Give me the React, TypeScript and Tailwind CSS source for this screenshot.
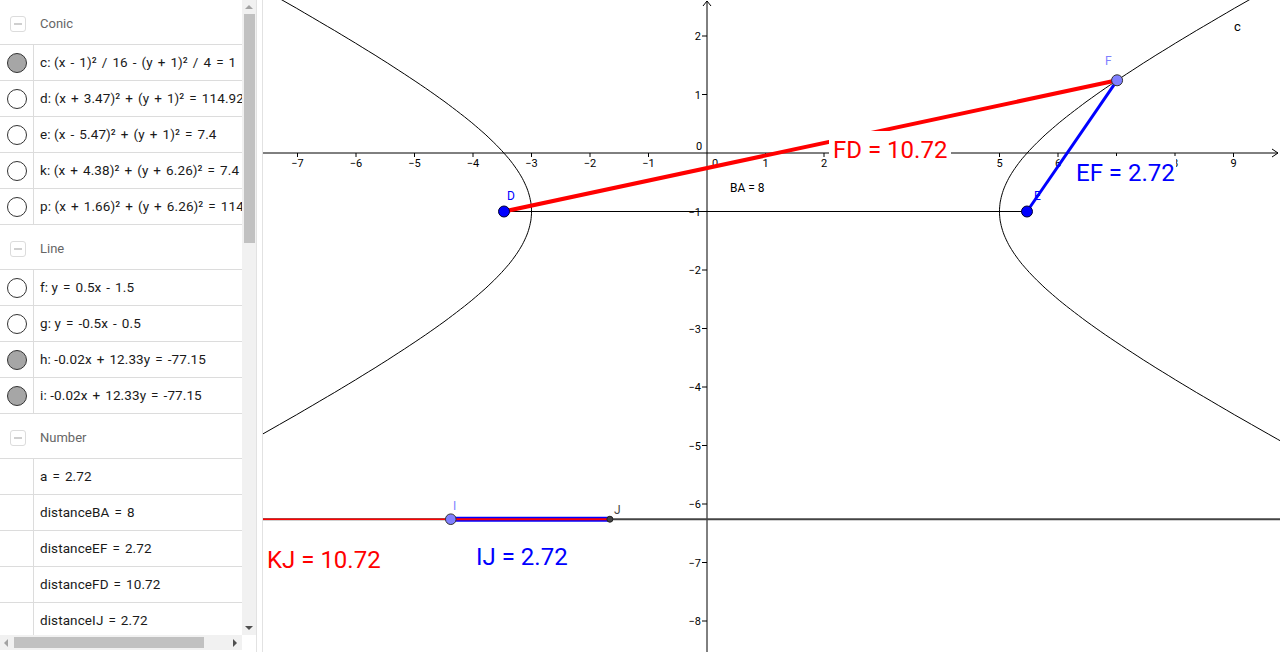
import React from 'react';

const S = 58.5;
const OX = 707;
const OY = 153;
const X = (x: number) => OX + S * x;
const Y = (y: number) => OY - S * y;

type Row = { text: string; marker?: 'filled' | 'empty' };

const GROUPS: { title: string; rows: Row[] }[] = [
  {
    title: 'Conic',
    rows: [
      { text: 'c: (x - 1)² / 16 - (y + 1)² / 4 = 1', marker: 'filled' },
      { text: 'd: (x + 3.47)² + (y + 1)² = 114.92', marker: 'empty' },
      { text: 'e: (x - 5.47)² + (y + 1)² = 7.4', marker: 'empty' },
      { text: 'k: (x + 4.38)² + (y + 6.26)² = 7.4', marker: 'empty' },
      { text: 'p: (x + 1.66)² + (y + 6.26)² = 114.92', marker: 'empty' },
    ],
  },
  {
    title: 'Line',
    rows: [
      { text: 'f: y = 0.5x - 1.5', marker: 'empty' },
      { text: 'g: y = -0.5x - 0.5', marker: 'empty' },
      { text: 'h: -0.02x + 12.33y = -77.15', marker: 'filled' },
      { text: 'i: -0.02x + 12.33y = -77.15', marker: 'filled' },
    ],
  },
  {
    title: 'Number',
    rows: [
      { text: 'a = 2.72' },
      { text: 'distanceBA = 8' },
      { text: 'distanceEF = 2.72' },
      { text: 'distanceFD = 10.72' },
      { text: 'distanceIJ = 2.72' },
    ],
  },
];

// binary operators get a little extra room, like the math renderer does
function MathText({ text }: { text: string }) {
  const parts = text.split(/ ([-+=/]) /);
  return (
    <>
      {parts.map((p, i) =>
        i % 2 === 1 ? (
          <span key={i} className="mx-[1.5px]">
            {' ' + p + ' '}
          </span>
        ) : (
          <span key={i}>{p}</span>
        )
      )}
    </>
  );
}

function branch(sign: number) {
  const pts: string[] = [];
  for (let t = -2.4; t <= 2.4; t += 0.02) {
    const x = 1 + sign * 4 * Math.cosh(t);
    const y = -1 + 2 * Math.sinh(t);
    pts.push(`${X(x).toFixed(1)},${Y(y).toFixed(1)}`);
  }
  return 'M' + pts.join(' L');
}

function AlgebraView() {
  return (
    <div className="w-[242px] overflow-hidden bg-white">
      {GROUPS.map((g) => (
        <div key={g.title}>
          <div className="flex h-[44px] items-center pt-[4px]">
            <div className="ml-[10px] flex h-[16px] w-[16px] items-center justify-center rounded-[3px] border border-[#dcdcdc]">
              <div className="h-[2px] w-[8px] bg-[#cfcfcf]" />
            </div>
            <span className="ml-[14px] text-[13px] text-[#666]">{g.title}</span>
          </div>
          <div className="border-b border-[#dcdcdc]">
            {g.rows.map((r) => (
              <div key={r.text} className="flex h-[36px] border-t border-[#dcdcdc]">
                <div className="flex w-[34px] shrink-0 items-center justify-center border-r border-[#dcdcdc]">
                  {r.marker && (
                    <div
                      className={
                        r.marker === 'filled'
                          ? 'h-[20px] w-[20px] rounded-full border border-[#333] bg-[#a6a6a6]'
                          : 'h-[20px] w-[20px] rounded-full border border-[#333] bg-white'
                      }
                    />
                  )}
                </div>
                <div className="flex items-center whitespace-pre pl-[6px] text-[13.5px] tracking-[0.1px] text-[#1a1a1a]">
                  <MathText text={r.text} />
                </div>
              </div>
            ))}
          </div>
        </div>
      ))}
    </div>
  );
}

function Graphics() {
  const xTicks = [-7, -6, -5, -4, -3, -2, -1, 1, 2, 3, 4, 5, 6, 7, 8, 9];
  const yTicks = [2, 1, -1, -2, -3, -4, -5, -6, -7, -8];
  const D = { x: X(-3.47), y: Y(-1) };
  const E = { x: X(5.47), y: Y(-1) };
  const F = { x: X(7.01), y: Y(1.243) };
  const I = { x: X(-4.38), y: Y(-6.26) };
  const J = { x: X(-1.66), y: Y(-6.26) };
  return (
    <svg width={1017} height={652} viewBox="263 0 1017 652" className="block font-['Roboto',sans-serif]">
      {/* axes */}
      <line x1={263} y1={OY} x2={1278} y2={OY} stroke="#000" strokeWidth={1} />
      <polyline points="1272,149 1278,153 1272,157" fill="none" stroke="#000" strokeWidth={1} />
      <line x1={OX} y1={1} x2={OX} y2={652} stroke="#000" strokeWidth={1} />
      <polyline points="703,6 707,1 711,6" fill="none" stroke="#000" strokeWidth={1} />
      {xTicks.map((t) => (
        <g key={'x' + t}>
          <line x1={X(t)} y1={OY} x2={X(t)} y2={OY + 4} stroke="#000" />
          <text x={X(t)} y={167} fontSize={11} textAnchor="middle" fill="#000">
            {t < 0 ? '−' + -t : t}
          </text>
        </g>
      ))}
      {yTicks.map((t) => (
        <g key={'y' + t}>
          <line x1={OX - 5} y1={Y(t)} x2={OX} y2={Y(t)} stroke="#000" />
          <text x={701} y={Y(t) + 4} fontSize={11} textAnchor="end" fill="#000">
            {t < 0 ? '−' + -t : t}
          </text>
        </g>
      ))}
      <text x={699} y={150} fontSize={11} textAnchor="middle" fill="#000">0</text>
      <text x={715} y={167} fontSize={11} textAnchor="middle" fill="#000">0</text>

      {/* hyperbola c */}
      <path d={branch(-1)} fill="none" stroke="#000" strokeWidth={1} />
      <path d={branch(1)} fill="none" stroke="#000" strokeWidth={1} />

      {/* segment between the foci */}
      <line x1={D.x} y1={D.y} x2={E.x} y2={E.y} stroke="#000" strokeWidth={1} />

      {/* bottom line and segments */}
      <line x1={263} y1={J.y} x2={1280} y2={J.y} stroke="#444" strokeWidth={2} />
      <line x1={263} y1={J.y} x2={J.x} y2={J.y} stroke="#ff0000" strokeWidth={1.5} />
      <line x1={I.x} y1={I.y} x2={J.x} y2={J.y} stroke="#0000ff" strokeWidth={5} />
      <line x1={I.x} y1={I.y} x2={J.x} y2={J.y} stroke="#ff0000" strokeWidth={2} />

      {/* FD and EF */}
      <line x1={D.x} y1={D.y} x2={F.x} y2={F.y} stroke="#ff0000" strokeWidth={4} />
      <text x={1034} y={200} fontSize={12} fill="#0000ff">E</text>
      <line x1={E.x} y1={E.y} x2={F.x} y2={F.y} stroke="#0000ff" strokeWidth={3} />

      {/* value labels with background */}
      <rect x={829} y={131} width={122} height={38} fill="#fff" />
      <text x={833} y={158} fontSize={24} fill="#ff0000">FD = 10.72</text>
      <rect x={1073} y={156} width={103} height={30} fill="#fff" />
      <text x={1076} y={181} fontSize={24} fill="#0000ff">EF = 2.72</text>
      <text x={267} y={568} fontSize={24} fill="#ff0000">KJ = 10.72</text>
      <text x={476} y={565} fontSize={24} fill="#0000ff">IJ = 2.72</text>

      <text x={730} y={192} fontSize={12} fill="#000">BA = 8</text>
      <text x={1234} y={31} fontSize={13} fill="#000">c</text>

      {/* points */}
      <circle cx={D.x} cy={D.y} r={5.5} fill="#0000ff" stroke="#000033" strokeWidth={1} />
      <circle cx={E.x} cy={E.y} r={5.5} fill="#0000ff" stroke="#000033" strokeWidth={1} />
      <circle cx={F.x} cy={F.y} r={5.5} fill="#8080ff" stroke="#333" strokeWidth={1} />
      <circle cx={I.x} cy={I.y} r={5.3} fill="#8080ff" stroke="#333" strokeWidth={1} />
      <circle cx={J.x} cy={J.y} r={3} fill="#444" stroke="#222" strokeWidth={1} />

      <text x={507} y={200} fontSize={12} fill="#0000ff">D</text>
      <text x={1105} y={65} fontSize={12} fill="#8080ff">F</text>
      <text x={453} y={510} fontSize={12} fill="#8080ff">I</text>
      <text x={614} y={514} fontSize={12} fill="#444">J</text>
    </svg>
  );
}

export default function App() {
  return (
    <div className="flex h-[652px] w-[1280px] overflow-hidden bg-white font-['Roboto',sans-serif]">
      <div className="flex w-[256px] shrink-0 flex-col">
        <div className="flex min-h-0 flex-1">
          <AlgebraView />
          <div className="flex w-[14px] flex-col items-center bg-[#f1f1f1]">
            <div className="mt-[5px] h-0 w-0 border-x-[4px] border-b-[4px] border-x-transparent border-b-[#a3a3a3]" />
            <div className="mt-[5px] h-[229px] w-[11px] bg-[#c1c1c1]" />
            <div className="flex-1" />
            <div className="mb-[5px] h-0 w-0 border-x-[4px] border-t-[4px] border-x-transparent border-t-[#505050]" />
          </div>
        </div>
        <div className="flex h-[17px]">
          <div className="flex h-[15px] w-[242px] items-center bg-[#f1f1f1]">
            <div className="ml-[4px] h-0 w-0 border-y-[4px] border-r-[4px] border-y-transparent border-r-[#a3a3a3]" />
            <div className="ml-[6px] h-[11px] w-[190px] bg-[#c1c1c1]" />
            <div className="flex-1" />
            <div className="mr-[5px] h-0 w-0 border-y-[4px] border-l-[4px] border-y-transparent border-l-[#505050]" />
          </div>
        </div>
      </div>
      <div className="w-[7px] shrink-0 border-x border-[#e2e2e2] bg-white" />
      <Graphics />
    </div>
  );
}
